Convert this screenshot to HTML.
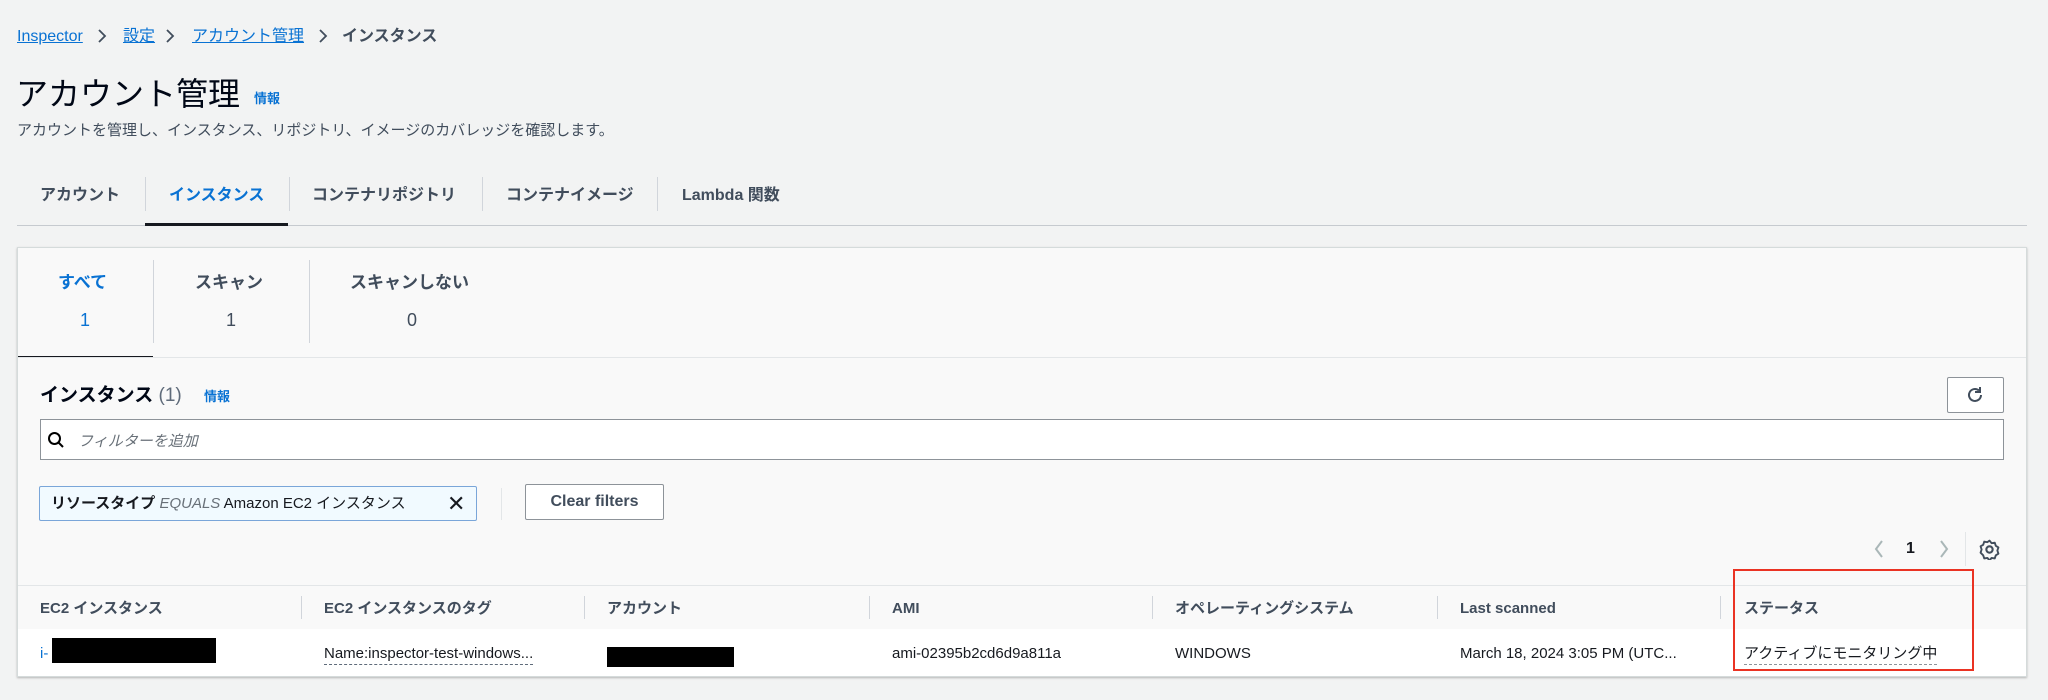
<!DOCTYPE html>
<html><head><meta charset="utf-8"><style>
*{box-sizing:border-box;margin:0;padding:0}
body{width:2048px;height:700px;background:#f2f3f3;font-family:"Liberation Sans","Noto Sans CJK JP",sans-serif;color:#16191f;position:relative;overflow:hidden}
.a{position:absolute;white-space:nowrap;line-height:1.25}
.vd{position:absolute;width:1px;background:#d1d5db}
.hd{font-size:15px;font-weight:bold;color:#414d5c;top:600px}
.cd{font-size:15px;top:645px;color:#16191f}
.bc{font-size:16px;top:27px}
.link{color:#0972d3}
</style></head><body>
<div class="a bc link" style="left:17px;text-decoration:underline">Inspector</div>
<svg class="a" style="left:97px;top:28px" width="10" height="16" viewBox="0 0 10 16"><path d="M2 2l6 6-6 6" fill="none" stroke="#414d5c" stroke-width="1.8"/></svg>
<div class="a bc link" style="left:123px;text-decoration:underline">設定</div>
<svg class="a" style="left:165px;top:28px" width="10" height="16" viewBox="0 0 10 16"><path d="M2 2l6 6-6 6" fill="none" stroke="#414d5c" stroke-width="1.8"/></svg>
<div class="a bc link" style="left:192px;text-decoration:underline">アカウント管理</div>
<svg class="a" style="left:318px;top:28px" width="10" height="16" viewBox="0 0 10 16"><path d="M2 2l6 6-6 6" fill="none" stroke="#414d5c" stroke-width="1.8"/></svg>
<div class="a bc" style="left:342px;font-weight:bold;color:#414d5c">インスタンス</div>

<div class="a" style="left:16px;top:74px;font-size:32px;color:#000716">アカウント管理</div>
<div class="a link" style="left:254px;top:91px;font-size:13px;font-weight:bold">情報</div>
<div class="a" style="left:17px;top:122px;font-size:15px;color:#414d5c">アカウントを管理し、インスタンス、リポジトリ、イメージのカバレッジを確認します。</div>

<div class="a" style="left:40px;top:186px;font-size:16px;font-weight:bold;color:#414d5c">アカウント</div>
<div class="vd" style="left:145px;top:177px;height:34px"></div>
<div class="a link" style="left:169px;top:186px;font-size:16px;font-weight:bold">インスタンス</div>
<div class="vd" style="left:289px;top:177px;height:34px"></div>
<div class="a" style="left:312px;top:186px;font-size:16px;font-weight:bold;color:#414d5c">コンテナリポジトリ</div>
<div class="vd" style="left:482px;top:177px;height:34px"></div>
<div class="a" style="left:506px;top:186px;font-size:16px;font-weight:bold;color:#414d5c">コンテナイメージ</div>
<div class="vd" style="left:657px;top:177px;height:34px"></div>
<div class="a" style="left:682px;top:186px;font-size:16px;font-weight:bold;color:#414d5c">Lambda 関数</div>
<div class="a" style="left:17px;top:225px;width:2010px;height:1px;background:#c6cacf"></div>
<div class="a" style="left:145px;top:223px;width:143px;height:3px;background:#16191f"></div>

<div class="a" style="left:17px;top:247px;width:2010px;height:430px;background:#f9f9f9;border:1px solid #d5dbdb;box-shadow:0 1px 2px rgba(0,0,0,.25)"></div>
<div class="a link" style="left:58px;top:272px;font-size:17px;font-weight:bold">すべて</div>
<div class="a link" style="left:80px;top:309px;font-size:18px">1</div>
<div class="vd" style="left:153px;top:260px;height:83px"></div>
<div class="a" style="left:195px;top:272px;font-size:17px;font-weight:bold;color:#414d5c">スキャン</div>
<div class="a" style="left:226px;top:309px;font-size:18px;color:#414d5c">1</div>
<div class="vd" style="left:309px;top:260px;height:83px"></div>
<div class="a" style="left:350px;top:272px;font-size:17px;font-weight:bold;color:#414d5c">スキャンしない</div>
<div class="a" style="left:407px;top:309px;font-size:18px;color:#414d5c">0</div>
<div class="a" style="left:18px;top:356px;width:135px;height:2px;background:#16191f"></div>
<div class="a" style="left:18px;top:357px;width:2008px;height:1px;background:#e3e6e8"></div>

<div class="a" style="left:40px;top:384px;font-size:19px;font-weight:bold;color:#000716">インスタンス <span style="font-weight:normal;color:#5f6b7a">(1)</span></div>
<div class="a link" style="left:204px;top:389px;font-size:13px;font-weight:bold">情報</div>
<div class="a" style="left:1947px;top:377px;width:57px;height:36px;border:1px solid #8d9399;border-radius:2px;background:#fff"></div>
<svg class="a" style="left:1965px;top:385px" width="20" height="20" viewBox="0 0 20 20"><path d="M16 10a6 6 0 1 1-2-4.5" fill="none" stroke="#414d5c" stroke-width="2"/><path d="M15 2v5h-5" fill="none" stroke="#414d5c" stroke-width="2"/></svg>

<div class="a" style="left:40px;top:419px;width:1964px;height:41px;border:1px solid #8d9399;background:#fff"></div>
<svg class="a" style="left:47px;top:431px" width="18" height="18" viewBox="0 0 18 18"><circle cx="7.5" cy="7.5" r="5.5" fill="none" stroke="#000" stroke-width="2"/><path d="M11.5 11.5l4.5 4.5" stroke="#000" stroke-width="2"/></svg>
<div class="a" style="left:78px;top:433px;font-size:15px;font-style:italic;color:#687078">フィルターを追加</div>

<div class="a" style="left:39px;top:486px;width:438px;height:35px;border:1px solid #7aa6d9;border-radius:2px;background:#f1faff"></div>
<div class="a" style="left:51px;top:495px;font-size:15px;color:#16191f"><b>リソースタイプ</b> <i style="color:#687078">EQUALS</i> Amazon EC2 インスタンス</div>
<div class="a" style="left:447px;top:490px;font-size:22px">✕</div>
<div class="vd" style="left:501px;top:488px;height:32px;background:#e3e6e8"></div>
<div class="a" style="left:525px;top:484px;width:139px;height:36px;border:1px solid #8d9399;border-radius:2px;background:#fff;font-size:16px;font-weight:bold;color:#414d5c;text-align:center;line-height:34px">Clear filters</div>

<svg class="a" style="left:1873px;top:539px" width="12" height="20" viewBox="0 0 12 20"><path d="M9 2L3 10l6 8" fill="none" stroke="#aab7b8" stroke-width="2"/></svg>
<div class="a" style="left:1906px;top:539px;font-size:16px;font-weight:bold">1</div>
<svg class="a" style="left:1938px;top:539px" width="12" height="20" viewBox="0 0 12 20"><path d="M3 2l6 8-6 8" fill="none" stroke="#aab7b8" stroke-width="2"/></svg>
<div class="vd" style="left:1965px;top:532px;height:34px;background:#e3e6e8"></div>
<svg class="a" style="left:1979px;top:539px" width="21" height="21" viewBox="0 0 20 20"><circle cx="10" cy="10" r="3" fill="none" stroke="#414d5c" stroke-width="2"/><path d="M10 1.5l2 2.5 3-.5 1 3 2.5 1.5-1 3 1 3-2.5 1.5-1 3-3-.5-2 2.5-2-2.5-3 .5-1-3L1.5 13l1-3-1-3L4 5.5l1-3 3 .5z" fill="none" stroke="#414d5c" stroke-width="1.8" stroke-linejoin="round"/></svg>

<div class="a" style="left:18px;top:585px;width:2008px;height:1px;background:#e3e6e8"></div>
<div class="a" style="left:18px;top:629px;width:2008px;height:47px;background:#fff"></div>
<div class="a hd" style="left:40px">EC2 インスタンス</div>
<div class="vd" style="left:301px;top:596px;height:23px"></div>
<div class="a hd" style="left:324px">EC2 インスタンスのタグ</div>
<div class="vd" style="left:584px;top:596px;height:23px"></div>
<div class="a hd" style="left:607px">アカウント</div>
<div class="vd" style="left:869px;top:596px;height:23px"></div>
<div class="a hd" style="left:892px">AMI</div>
<div class="vd" style="left:1152px;top:596px;height:23px"></div>
<div class="a hd" style="left:1175px">オペレーティングシステム</div>
<div class="vd" style="left:1437px;top:596px;height:23px"></div>
<div class="a hd" style="left:1460px">Last scanned</div>
<div class="vd" style="left:1720px;top:596px;height:23px"></div>
<div class="a hd" style="left:1744px">ステータス</div>

<div class="a cd" style="left:40px;color:#0972d3">i-</div>
<div class="a" style="left:52px;top:638px;width:164px;height:25px;background:#000"></div>
<div class="a cd" style="left:324px;border-bottom:1px dashed #5f6b7a">Name:inspector-test-windows...</div>
<div class="a" style="left:607px;top:647px;width:127px;height:20px;background:#000"></div>
<div class="a cd" style="left:892px">ami-02395b2cd6d9a811a</div>
<div class="a cd" style="left:1175px">WINDOWS</div>
<div class="a cd" style="left:1460px">March 18, 2024 3:05 PM (UTC...</div>
<div class="a cd" style="left:1744px;border-bottom:1px dashed #8d9399">アクティブにモニタリング中</div>

<div class="a" style="left:1733px;top:569px;width:241px;height:102px;border:2px solid #ea3323"></div>
</body></html>
